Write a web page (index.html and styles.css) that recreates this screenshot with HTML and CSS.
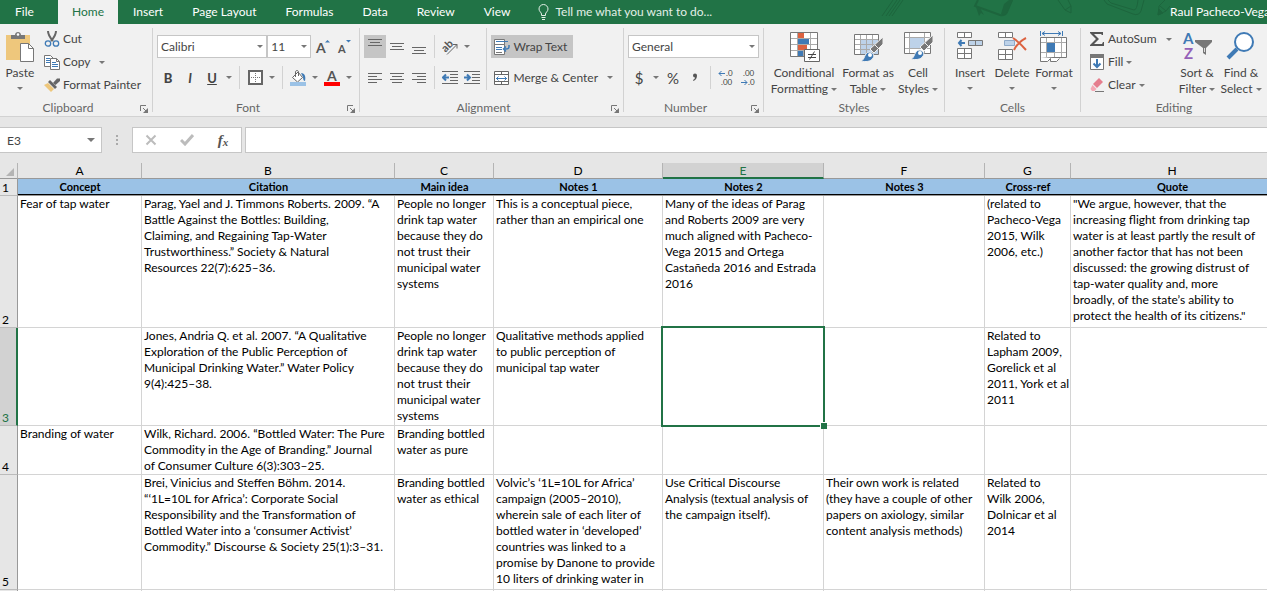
FILE: index.html
```html
<!DOCTYPE html>
<html lang="en">
<head>
    <meta charset="UTF-8">
    <meta name="viewport" content="width=device-width, initial-scale=1.0">
    <title>Literature notes - Excel</title>
    <link rel="stylesheet" href="styles.css">
</head>
<body>
    <!-- Ribbon tabs -->
    <header class="tabs">
        <svg class="doodles" width="300" height="24" viewBox="870 0 300 24" fill="none" stroke="#1d653d" stroke-width="1">
            <path d="M882 16 893 0M886 16 897 0M889 16 900 0M892 16 903 0"/>
            <path d="M978 0 975 6 1000 15Q1005 16 1007 12L1012 0" stroke-width="2"/>
            <path d="M976 7l3 9 2-3 3 2-4-7zM1004 4l5-4h4l-8 15-4-1z" fill="#1d653d" stroke="none"/>
            <path d="M1058 0l7 10 6 3 0-7-3-6M1065 10l6-4"/>
            <path d="M1104 0 1107 4 1133 14Q1139 16 1141 11L1144 0M1108 0 1111 3 1134 10Q1137 10 1138 0"/>
            <path d="M1165 0 1159 6 1158 15 1166 11 1170 6M1160 6l6 5"/>
            <path d="M1158 15l1-6 4 4z" fill="#1d653d"/>
        </svg>
        <nav>
            <a href="#" class="tab tab-file">File</a>
            <a href="#" class="tab active">Home</a>
            <a href="#" class="tab">Insert</a>
            <a href="#" class="tab">Page Layout</a>
            <a href="#" class="tab">Formulas</a>
            <a href="#" class="tab">Data</a>
            <a href="#" class="tab">Review</a>
            <a href="#" class="tab">View</a>
        </nav>
        <button class="tell-me">
            <svg width="11" height="16" viewBox="0 0 11 16" fill="none" stroke="#e3efe7"><path d="M3.5 11.500V10C3.500 8.500 1 7.500 1 5a4.500 4.500 0 0 1 9 0c0 2.500-2.500 3.500-2.500 5v1.500zM3.500 13.500h4M4 15.500h3"/></svg>
            Tell me what you want to do...
        </button>
        <span class="user">Raul Pacheco-Vega</span>
    </header>

    <!-- Ribbon -->
    <section class="ribbon">
        <div class="group clipboard">
            <div class="group-body">
                <button class="big paste">
                    <svg width="32" height="32" viewBox="0 0 32 32">
                        <path d="M2 4h24v25H2z" fill="#eec77c"/>
                        <path d="M7 8V4h4c0-4 6-4 6 0h4v4z" fill="#777"/><circle cx="14" cy="3.500" r="1.300" fill="#fff"/>
                        <path d="M16.500 12.500h8l5 5v13h-13z" fill="#fff" stroke="#777"/>
                        <path d="M24.500 12.500v5h5" fill="none" stroke="#777"/>
                    </svg>
                    <span>Paste</span>
                    <i class="caret"></i>
                </button>
                <div class="stack">
                    <button class="small">
                        <svg width="16" height="16" viewBox="0 0 16 16" fill="none">
                            <path d="M4 0c0 4 1.500 6 5 10M12 0c0 4-1.500 6-5 10" stroke="#666" stroke-width="2"/>
                            <circle cx="4" cy="12.500" r="2.700" stroke="#3f7ab5" stroke-width="1.300"/><circle cx="12" cy="12.500" r="2.700" stroke="#3f7ab5" stroke-width="1.300"/>
                        </svg>
                        Cut
                    </button>
                    <button class="small">
                        <svg width="16" height="16" viewBox="0 0 16 16">
                            <path d="M.5 1.500h6l3 3v8h-9z" fill="#fff" stroke="#777"/>
                            <path d="M2 4.500h4M2 6.500h4M2 8.500h4" stroke="#3f7ab5"/>
                            <path d="M6.500 4.500h6l3 3v8h-9z" fill="#fff" stroke="#777"/>
                            <path d="M12.500 4.500v3h3" fill="none" stroke="#777"/>
                            <path d="M8 8.500h4M8 10.500h6M8 12.500h6" stroke="#3f7ab5"/>
                        </svg>
                        Copy
                        <i class="caret wide"></i>
                    </button>
                    <button class="small">
                        <svg width="16" height="16" viewBox="0 0 16 16">
                            <path d="M0 8l4-2 6 6-3 3z" fill="#eec77c"/>
                            <path d="M4 5l2-2 7 7-2 2z" fill="#666"/>
                            <path d="M9 6l4-4.500h3V4l-4.500 4z" fill="#666"/>
                        </svg>
                        Format Painter
                    </button>
                </div>
            </div>
            <div class="group-name"><span>Clipboard</span><button class="launcher" aria-label="Clipboard settings"><svg width="8" height="8" viewBox="0 0 8 8"><path d="M.5 6V.500H6M3 3l3 3" fill="none" stroke="#777"/><path d="M8 3v5H3z" fill="#777"/></svg></button></div>
        </div>

        <div class="group font">
            <div class="group-body rows">
                <div class="row">
                    <div class="combo combo-font">
                        <select aria-label="Font"><option>Calibri</option></select>
                        <i class="caret"></i>
                    </div>
                    <div class="combo combo-size">
                        <select aria-label="Font size"><option>11</option></select>
                        <i class="caret"></i>
                    </div>
                    <button class="tool" aria-label="Increase font size">
                        <svg width="16" height="16" viewBox="0 0 16 16"><text x="2" y="14" font-size="14" fill="#555" font-weight="bold">A</text><path d="M11 3.500l2.500-2.500L16 3.500z" fill="#3f7ab5"/></svg>
                    </button>
                    <button class="tool" aria-label="Decrease font size">
                        <svg width="16" height="16" viewBox="0 0 16 16"><text x="2" y="14" font-size="11" fill="#555" font-weight="bold">A</text><path d="M10 1h5l-2.500 2.500z" fill="#3f7ab5"/></svg>
                    </button>
                </div>
                <div class="row">
                    <button class="tool letter"><b>B</b></button>
                    <button class="tool letter"><em>I</em></button>
                    <button class="tool letter"><u>U</u></button>
                    <button class="drop" aria-label="Underline styles"><i class="caret"></i></button>
                    <span class="sep"></span>
                    <button class="tool" aria-label="Borders">
                        <svg width="15" height="15" viewBox="0 0 15 15" fill="none"><path d="M1 1h13v13H1z" fill="#fff" stroke="#666" stroke-width="2"/><path d="M7.500 3v9M3 7.500h9" stroke="#777" stroke-dasharray="1 1"/></svg>
                    </button>
                    <button class="drop" aria-label="Border styles"><i class="caret"></i></button>
                    <span class="sep"></span>
                    <button class="tool" aria-label="Fill color">
                        <svg width="16" height="16" viewBox="0 0 16 16"><path d="M2.500 7.500L8 2l4.500 5.500L7.500 12z" fill="#fff" stroke="#666"/><path d="M5.500 7V2c0-2 3-2 3 0v4" fill="none" stroke="#666"/><path d="M11 3c4 0 5 4 4 8-1 0-2-1-2-4z" fill="#3f7ab5"/><path d="M0 12h16v4H0z" fill="#9bc2e6"/></svg>
                    </button>
                    <button class="drop" aria-label="Fill colors"><i class="caret"></i></button>
                    <button class="tool" aria-label="Font color">
                        <svg width="16" height="20" viewBox="0 0 16 20"><text x="3" y="13" font-size="14" fill="#555" font-weight="bold">A</text><path d="M0 14h16v4H0z" fill="#f00"/></svg>
                    </button>
                    <button class="drop" aria-label="Font colors"><i class="caret"></i></button>
                </div>
            </div>
            <div class="group-name"><span>Font</span><button class="launcher" aria-label="Font settings"><svg width="8" height="8" viewBox="0 0 8 8"><path d="M.5 6V.500H6M3 3l3 3" fill="none" stroke="#777"/><path d="M8 3v5H3z" fill="#777"/></svg></button></div>
        </div>

        <div class="group alignment">
            <div class="group-body">
                <div class="rows align-tools">
                    <div class="row">
                        <button class="tool pressed" aria-label="Top align"><svg width="14" height="16" viewBox="0 0 14 16" stroke="#666"><path d="M0 .5h14M2 3.500h10M0 6.500h14"/></svg></button>
                        <button class="tool" aria-label="Middle align"><svg width="14" height="16" viewBox="0 0 14 16" stroke="#666"><path d="M0 4.500h14M2 7.500h10M0 10.500h14"/></svg></button>
                        <button class="tool" aria-label="Bottom align"><svg width="14" height="16" viewBox="0 0 14 16" stroke="#666"><path d="M0 8.500h14M2 11.500h10M0 14.500h14"/></svg></button>
                        <span class="sep"></span>
                        <button class="tool" aria-label="Orientation">
                            <svg width="20" height="20" viewBox="0 0 20 20"><text x="2" y="13" font-size="11" font-weight="bold" fill="#555" transform="rotate(-45 7 10)">ab</text><path d="M7 17.500l10-10M13 7.500h4v4" fill="none" stroke="#666"/></svg>
                        </button>
                        <button class="drop" aria-label="Orientation options"><i class="caret"></i></button>
                    </div>
                    <div class="row">
                        <button class="tool" aria-label="Align left"><svg width="14" height="12" viewBox="0 0 14 12" stroke="#666"><path d="M0 1.500h14M0 4.500h9M0 7.500h14M0 10.500h9"/></svg></button>
                        <button class="tool" aria-label="Center"><svg width="14" height="12" viewBox="0 0 14 12" stroke="#666"><path d="M0 1.500h14M2 4.500h10M0 7.500h14M2 10.500h10"/></svg></button>
                        <button class="tool" aria-label="Align right"><svg width="14" height="12" viewBox="0 0 14 12" stroke="#666"><path d="M0 1.500h14M5 4.500h9M0 7.500h14M5 10.500h9"/></svg></button>
                        <span class="sep"></span>
                        <button class="tool" aria-label="Decrease indent"><svg width="16" height="14" viewBox="0 0 16 14" fill="none"><path d="M0 .5h16M8 3.500h8M8 6.500h8M8 9.500h8M0 12.500h16" stroke="#666"/><path d="M1 6.500h6M4 3.500l-3 3 3 3" stroke="#3f7ab5" stroke-width="2"/></svg></button>
                        <button class="tool" aria-label="Increase indent"><svg width="16" height="14" viewBox="0 0 16 14" fill="none"><path d="M0 .5h16M8 3.500h8M8 6.500h8M8 9.500h8M0 12.500h16" stroke="#666"/><path d="M0 6.500h6M3 3.500l3 3-3 3" stroke="#3f7ab5" stroke-width="2"/></svg></button>
                    </div>
                </div>
                <div class="rows wrap-tools">
                    <button class="text-tool pressed">
                        <svg width="16" height="16" viewBox="0 0 16 16" fill="none"><path d="M.5.500h10v5H.500zM.500 5.500h10v10H.500z" fill="#fff" stroke="#777"/><path d="M2 2.500h12M2 8.500h6M2 10.500h6" stroke="#3f7ab5"/><path d="M2 13.500h6" stroke="#777"/><path d="M15 6v2q0 2-3 2h-2M12 7.500l-2.500 2.500 2.500 2.500" stroke="#3f7ab5" stroke-width="1.500"/></svg>
                        Wrap Text
                    </button>
                    <button class="text-tool">
                        <svg width="16" height="16" viewBox="0 0 16 16" fill="none"><path d="M.5 1.500h14v13H.500zM.500 4.500h14M.500 11.500h14M7.500 1.500v3M7.500 11.500v3" fill="#fff" stroke="#666"/><path d="M2 8.500h11M4.500 6.500l-2 2 2 2M10.500 6.500l2 2-2 2" stroke="#3f7ab5"/></svg>
                        Merge &amp; Center
                        <i class="caret wide"></i>
                    </button>
                </div>
            </div>
            <div class="group-name"><span>Alignment</span><button class="launcher" aria-label="Alignment settings"><svg width="8" height="8" viewBox="0 0 8 8"><path d="M.5 6V.500H6M3 3l3 3" fill="none" stroke="#777"/><path d="M8 3v5H3z" fill="#777"/></svg></button></div>
        </div>

        <div class="group number">
            <div class="group-body rows">
                <div class="row">
                    <div class="combo combo-format">
                        <select aria-label="Number format"><option>General</option></select>
                        <i class="caret"></i>
                    </div>
                </div>
                <div class="row">
                    <button class="tool sign">$</button>
                    <button class="drop" aria-label="Currency formats"><i class="caret"></i></button>
                    <button class="tool sign">%</button>
                    <button class="tool" aria-label="Comma style"><svg width="6" height="10" viewBox="0 0 6 10"><path d="M1 2.500A2 2 0 0 1 5 2.500C5 5 4 7 1.500 8L1 7q2-1 2-2.500Q1 4.500 1 2.500z" fill="#555"/></svg></button>
                    <span class="sep"></span>
                    <button class="tool" aria-label="Increase decimal"><svg width="16" height="20" viewBox="0 0 16 20" font-size="8" fill="#444"><text x="8" y="8">.0</text><text x="3" y="17">.00</text><path d="M1 5.500h6M3.500 3l-2.500 2.500L3.500 8" fill="none" stroke="#3f7ab5"/></svg></button>
                    <button class="tool" aria-label="Decrease decimal"><svg width="16" height="20" viewBox="0 0 16 20" font-size="8" fill="#444"><text x="3" y="8">.00</text><text x="8" y="17">.0</text><path d="M1 14.500h6M4.500 12L7 14.500 4.500 17" fill="none" stroke="#3f7ab5"/></svg></button>
                </div>
            </div>
            <div class="group-name"><span>Number</span><button class="launcher" aria-label="Number settings"><svg width="8" height="8" viewBox="0 0 8 8"><path d="M.5 6V.500H6M3 3l3 3" fill="none" stroke="#777"/><path d="M8 3v5H3z" fill="#777"/></svg></button></div>
        </div>

        <div class="group styles">
            <div class="group-body">
                <button class="big conditional">
                    <svg width="32" height="32" viewBox="0 0 32 32">
                        <path d="M2.500 1.500h27v24h-27z" fill="#fff" stroke="#777"/>
                        <path d="M9.500 2v23M15.500 2v23M22.500 2v23M3 7.500h26M3 13.500h26M3 19.500h26" stroke="#aaa"/>
                        <path d="M10 2h6v5h-6zM10 14h9v5h-9z" fill="#dc6240"/><path d="M10 8h11v5H10zM10 20h5v5h-5z" fill="#3f7ab5"/>
                        <path d="M16.500 18.500h15v12h-15z" fill="#fff" stroke="#666"/>
                        <path d="M20 23.500h8M20 26.500h8M26.500 20.500l-5 8" stroke="#444" fill="none"/>
                    </svg>
                    <span>Conditional</span>
                    <span>Formatting <i class="caret"></i></span>
                </button>
                <button class="big format-table">
                    <svg width="32" height="32" viewBox="0 0 32 32">
                        <path d="M2.500 3.500h24v20h-24z" fill="#fff"/><path d="M9 9h17v14H9z" fill="#bdd2e9"/>
                        <path d="M8.500 4v19M14.500 4v19M20.500 4v19M3 8.500h23M3 13.500h23M3 18.500h23" stroke="#aaa"/>
                        <path d="M2.500 3.500h24v20h-24z" fill="none" stroke="#777"/>
                        <path d="M31 6v7l-9 9-4-4z" fill="#777" stroke="#f1f1f1"/><path d="M23 14l4 4" stroke="#f1f1f1"/>
                        <path d="M9 30c4-1 3-8 8-9 4 0 6 4 4 6-2 4-8 4-12 3z" fill="#3f7ab5" stroke="#f1f1f1"/><circle cx="18" cy="24" r="2" fill="#fff"/>
                    </svg>
                    <span>Format as</span>
                    <span>Table <i class="caret"></i></span>
                </button>
                <button class="big cell-styles">
                    <svg width="32" height="32" viewBox="0 0 32 32">
                        <path d="M2.500 1.500h26v21h-26z" fill="#fff" stroke="#777"/><path d="M8 7h14v10H8z" fill="#bdd2e9"/>
                        <path d="M7.500 2v20M22.500 2v20M3 6.500h25M3 17.500h25" stroke="#aaa"/>
                        <path d="M31 4v7l-9 9-4-4z" fill="#777" stroke="#f1f1f1"/><path d="M23 12l4 4" stroke="#f1f1f1"/>
                        <path d="M9 28c4-1 3-8 8-9 4 0 6 4 4 6-2 4-8 4-12 3z" fill="#3f7ab5" stroke="#f1f1f1"/><circle cx="18" cy="22" r="2" fill="#fff"/>
                    </svg>
                    <span>Cell</span>
                    <span>Styles <i class="caret"></i></span>
                </button>
            </div>
            <div class="group-name"><span>Styles</span></div>
        </div>

        <div class="group cells">
            <div class="group-body">
                <button class="big">
                    <svg width="32" height="32" viewBox="0 0 32 32">
                        <path d="M3.500 1.500h14v5h-14zM10.500 1.500v5M3.500 17.500h14v10h-14zM3.500 22.500h14M10.500 17.500v10" fill="#fff" stroke="#777"/>
                        <path d="M14.500 9.500h14v5h-14zM21.500 9.500v5" fill="#bdd2e9" stroke="#777"/>
                        <path d="M5 12h6M7.500 9L5 12l2.500 3" fill="none" stroke="#3f7ab5" stroke-width="2"/>
                    </svg>
                    <span>Insert</span>
                    <i class="caret"></i>
                </button>
                <button class="big">
                    <svg width="32" height="32" viewBox="0 0 32 32">
                        <path d="M2.500 1.500h14v5h-14zM9.500 1.500v5M2.500 18.500h14v10h-14zM2.500 23.500h14M9.500 18.500v10" fill="#fff" stroke="#777"/>
                        <path d="M8.500 9.500h10v5h-10z" fill="#bdd2e9" stroke="#8da9c9"/>
                        <path d="M17 7q6 4 13 12M30 7q-8 4-12 12" fill="none" stroke="#dc6240" stroke-width="2"/>
                    </svg>
                    <span>Delete</span>
                    <i class="caret"></i>
                </button>
                <button class="big">
                    <svg width="32" height="32" viewBox="0 0 32 32">
                        <path d="M2.500 6.500h26v20h-26z" fill="#fff" stroke="#777"/>
                        <path d="M8.500 7v19M16.500 7v19M23.500 7v19M3 11.500h25M3 21.500h25" stroke="#aaa"/>
                        <path d="M9 12h8v9H9z" fill="#3f7ab5"/>
                        <path d="M2.500 26v4.500h7l3-3v3h6l3-3" fill="#fff" stroke="#777"/>
                        <path d="M2.500 0v5M24.500 0v5M4 2.500h19M7 .5l-3 2 3 2M20 .5l3 2-3 2" fill="none" stroke="#3f7ab5"/>
                    </svg>
                    <span>Format</span>
                    <i class="caret"></i>
                </button>
            </div>
            <div class="group-name"><span>Cells</span></div>
        </div>

        <div class="group editing">
            <div class="group-body">
                <div class="stack">
                    <button class="small">
                        <svg width="16" height="16" viewBox="0 0 16 16"><path d="M1 1h13v3h-1L12 3H5l5 5-5 5h8l1-2h1v4H1v-1l6-6-6-6z" fill="#555"/></svg>
                        AutoSum
                        <i class="caret wide"></i>
                    </button>
                    <button class="small">
                        <svg width="16" height="16" viewBox="0 0 16 16"><path d="M1.500.500h13v15h-13z" fill="#fff" stroke="#777"/><path d="M1 0h14v4H1z" fill="#777"/><path d="M8 5v8M4.500 9.500L8 13l3.500-3.500" fill="none" stroke="#3f7ab5" stroke-width="2"/></svg>
                        Fill<i class="caret"></i>
                    </button>
                    <button class="small">
                        <svg width="16" height="16" viewBox="0 0 16 16"><path d="M4 7l6-6 4 4-6 6z" fill="#e57e8e"/><path d="M3.500 8l4 4-2 2H3l-1.500-2z" fill="#f4a9b4"/><path d="M6 14.500h9" stroke="#777"/></svg>
                        Clear<i class="caret"></i>
                    </button>
                </div>
                <button class="big">
                    <svg width="32" height="32" viewBox="0 0 32 32">
                        <text x="2" y="13" font-size="15" font-weight="bold" fill="#3f7ab5">A</text>
                        <text x="3" y="28" font-size="15" font-weight="bold" fill="#9460b8">Z</text>
                        <path d="M14 9h17v2l-6 6v7l-3-2v-5l-8-6z" fill="#777"/><path d="M23.500 17v4" stroke="#ddd"/>
                    </svg>
                    <span>Sort &amp;</span>
                    <span>Filter <i class="caret"></i></span>
                </button>
                <button class="big">
                    <svg width="32" height="32" viewBox="0 0 32 32"><path d="M3 27L12 18" stroke="#3f7ab5" stroke-width="4"/><circle cx="19" cy="11" r="9" fill="#fff" stroke="#3f7ab5" stroke-width="2"/></svg>
                    <span>Find &amp;</span>
                    <span>Select <i class="caret"></i></span>
                </button>
            </div>
            <div class="group-name"><span>Editing</span></div>
        </div>
    </section>

    <!-- Name box and formula bar -->
    <section class="formula-bar">
        <div class="name-box">
            <input type="text" value="E3" aria-label="Name box">
            <i class="caret"></i>
        </div>
        <span class="dots"><i></i><i></i><i></i></span>
        <div class="fx-box">
            <button aria-label="Cancel"><svg width="12" height="12" viewBox="0 0 12 12"><path d="M1.500 1.500l9 9M10.500 1.500l-9 9" stroke="#bcbcbc" stroke-width="2"/></svg></button>
            <button aria-label="Enter"><svg width="14" height="12" viewBox="0 0 14 12"><path d="M1 6l4 4 8-9" fill="none" stroke="#bcbcbc" stroke-width="3"/></svg></button>
            <button class="fx">f<small>x</small></button>
        </div>
        <input class="formula" type="text" aria-label="Formula">
    </section>

    <!-- Worksheet -->
    <main class="sheet">
        <table>
            <colgroup>
                <col class="col-head"><col class="col-a"><col class="col-b"><col class="col-c"><col class="col-d"><col class="col-e"><col class="col-f"><col class="col-g"><col class="col-h">
            </colgroup>
            <thead>
                <tr>
                    <th class="corner"><svg width="8" height="8" viewBox="0 0 8 8"><path d="M8 0v8H0z" fill="#b4b4b4"/></svg></th>
                    <th>A</th>
                    <th>B</th>
                    <th>C</th>
                    <th>D</th>
                    <th class="current">E</th>
                    <th>F</th>
                    <th>G</th>
                    <th>H</th>
                </tr>
            </thead>
            <tbody>
                <tr class="titles">
                    <th>1</th>
                    <td>Concept</td>
                    <td>Citation</td>
                    <td>Main idea</td>
                    <td>Notes 1</td>
                    <td>Notes 2</td>
                    <td>Notes 3</td>
                    <td>Cross-ref</td>
                    <td>Quote</td>
                </tr>
                <tr class="row-2">
                    <th>2</th>
                    <td>Fear of tap water</td>
                    <td>Parag, Yael and J. Timmons Roberts. 2009. “A<br>Battle Against the Bottles: Building,<br>Claiming, and Regaining Tap-Water<br>Trustworthiness.” Society &amp; Natural<br>Resources 22(7):625–36.</td>
                    <td>People no longer<br>drink tap water<br>because they do<br>not trust their<br>municipal water<br>systems</td>
                    <td>This is a conceptual piece,<br>rather than an empirical one</td>
                    <td>Many of the ideas of Parag<br>and Roberts 2009 are very<br>much aligned with Pacheco-<br>Vega 2015 and Ortega<br>Castañeda 2016 and Estrada<br>2016</td>
                    <td></td>
                    <td>(related to<br>Pacheco-Vega<br>2015, Wilk<br>2006, etc.)</td>
                    <td>"We argue, however, that the<br>increasing flight from drinking tap<br>water is at least partly the result of<br>another factor that has not been<br>discussed: the growing distrust of<br>tap-water quality and, more<br>broadly, of the state’s ability to<br>protect the health of its citizens."</td>
                </tr>
                <tr class="row-3">
                    <th class="current">3</th>
                    <td></td>
                    <td>Jones, Andria Q. et al. 2007. “A Qualitative<br>Exploration of the Public Perception of<br>Municipal Drinking Water.” Water Policy<br>9(4):425–38.</td>
                    <td>People no longer<br>drink tap water<br>because they do<br>not trust their<br>municipal water<br>systems</td>
                    <td>Qualitative methods applied<br>to public perception of<br>municipal tap water</td>
                    <td class="selected"></td>
                    <td></td>
                    <td>Related to<br>Lapham 2009,<br>Gorelick et al<br>2011, York et al<br>2011</td>
                    <td></td>
                </tr>
                <tr class="row-4">
                    <th>4</th>
                    <td>Branding of water</td>
                    <td>Wilk, Richard. 2006. “Bottled Water: The Pure<br>Commodity in the Age of Branding.” Journal<br>of Consumer Culture 6(3):303–25.</td>
                    <td>Branding bottled<br>water as pure</td>
                    <td></td>
                    <td></td>
                    <td></td>
                    <td></td>
                    <td></td>
                </tr>
                <tr class="row-5">
                    <th>5</th>
                    <td></td>
                    <td>Brei, Vinicius and Steffen Böhm. 2014.<br>“‘1L=10L for Africa’: Corporate Social<br>Responsibility and the Transformation of<br>Bottled Water into a ‘consumer Activist’<br>Commodity.” Discourse &amp; Society 25(1):3–31.</td>
                    <td>Branding bottled<br>water as ethical</td>
                    <td>Volvic’s ‘1L=10L for Africa’<br>campaign (2005–2010),<br>wherein sale of each liter of<br>bottled water in ‘developed’<br>countries was linked to a<br>promise by Danone to provide<br>10 liters of drinking water in</td>
                    <td>Use Critical Discourse<br>Analysis (textual analysis of<br>the campaign itself).</td>
                    <td>Their own work is related<br>(they have a couple of other<br>papers on axiology, similar<br>content analysis methods)</td>
                    <td>Related to<br>Wilk 2006,<br>Dolnicar et al<br>2014</td>
                    <td></td>
                </tr>
                <tr class="row-6">
                    <th></th>
                    <td></td>
                    <td></td>
                    <td></td>
                    <td></td>
                    <td></td>
                    <td></td>
                    <td></td>
                    <td></td>
                </tr>
            </tbody>
        </table>
    </main>
</body>
</html>
```
FILE: styles.css
```css
* {
    margin: 0;
    padding: 0;
    box-sizing: border-box;
}

body {
    display: flex;
    flex-direction: column;
    height: 100vh;
    overflow: hidden;
    background: #e6e6e6;
    color: #444;
    font-family: Lato, "Open Sans", sans-serif;
    font-size: 12px;
    line-height: 16px;
}

button,
input,
select {
    font: inherit;
    color: inherit;
    background: none;
    border: none;
    white-space: nowrap;
}

svg {
    display: block;
    flex: none;
}

.caret {
    display: inline-block;
    flex: none;
    border: 3px solid transparent;
    border-top-color: #777;
    border-bottom: none;
    vertical-align: middle;
}

/* Tabs */
.tabs {
    position: relative;
    display: flex;
    flex: none;
    height: 24px;
    overflow: hidden;
    background: #217346;
    color: #fff;
    line-height: 24px;
    white-space: nowrap;
}

.doodles {
    position: absolute;
    top: 0;
    right: 97px;
}

.tabs nav {
    display: flex;
    gap: 1px;
}

.tab {
    padding: 0 14px;
    color: #fff;
    text-decoration: none;
}

.tab-file {
    width: 57px;
    padding: 0 15px;
}

.tab.active {
    width: 60px;
    background: #f1f1f1;
    color: #217346;
    text-align: center;
    padding: 0;
}

.tell-me {
    display: flex;
    align-items: center;
    gap: 6px;
    padding-left: 14px;
    color: #e3efe7;
}

.user {
    position: relative;
    width: 97px;
    margin-left: auto;
}

/* Ribbon */
.ribbon {
    display: flex;
    flex: none;
    padding: 4px 0;
    overflow: hidden;
    background: #f1f1f1;
    border-bottom: 1px solid #d2d2d2;
}

.group {
    display: flex;
    flex: none;
    flex-direction: column;
    height: 84px;
    border-right: 1px solid #d2d2d2;
}

.clipboard { width: 153px; }
.font { width: 207px; }
.alignment { width: 264px; }
.number { width: 140px; }
.styles { width: 181px; }
.cells { width: 136px; }
.editing { flex: 1 0 186px; border-right: none; }

.group-body {
    display: flex;
    height: 70px;
    padding: 0 4px;
}

.clipboard .group-body {
    padding: 0;
}

.group-name {
    display: flex;
    height: 14px;
    color: #666;
    line-height: 20px;
}

.group-name span {
    flex: 1;
    text-align: center;
}

.launcher {
    width: 16px;
    padding: 7px 0 0 4px;
}

.rows {
    display: flex;
    flex-direction: column;
    gap: 8px;
}

.group-body.rows,
.group-body .rows {
    padding-top: 7px;
}

.row {
    display: flex;
    align-items: center;
    height: 23px;
}

.tool,
.drop {
    display: flex;
    align-items: center;
    justify-content: center;
    flex: none;
    width: 22px;
    height: 23px;
}

.drop {
    width: 12px;
}

.letter {
    color: #444;
    font-size: 13px;
    font-weight: bold;
}

.sign {
    font-size: 15px;
}

.pressed {
    background: #c5c5c5;
}

.sep {
    width: 1px;
    height: 23px;
    margin: 0 4px;
    background: #d2d2d2;
}

.combo {
    position: relative;
    height: 23px;
    background: #fff;
    border: 1px solid #c6c6c6;
}

.combo select {
    width: 100%;
    height: 21px;
    padding-left: 3px;
    appearance: none;
}

.combo .caret {
    position: absolute;
    top: 9px;
    right: 3px;
    pointer-events: none;
}

.combo-font { width: 111px; }
.combo-size { width: 44px; }
.combo-format { width: 131px; }

/* Large buttons with the label under the icon */
.big {
    display: flex;
    flex-direction: column;
    align-items: center;
    flex: none;
    width: 42px;
    padding-top: 3px;
}

.big svg {
    margin-bottom: 2px;
}

.big > .caret {
    margin-top: 6px;
}

.paste { width: 40px; }
.conditional { width: 72px; }
.format-table { width: 56px; }
.cell-styles { width: 44px; }
.editing .big { width: 44px; }

.stack {
    display: flex;
    flex-direction: column;
    padding-left: 4px;
}

.editing .stack {
    width: 90px;
}

.small {
    display: flex;
    align-items: center;
    gap: 3px;
    height: 23px;
    padding-bottom: 1px;
}

.small .wide,
.text-tool .wide {
    margin-left: 6px;
}

.align-tools {
    width: 124px;
}

.wrap-tools {
    padding-left: 4px;
    margin-bottom: 8px;
    border-left: 1px solid #d2d2d2;
    align-items: flex-start;
}

.text-tool {
    display: flex;
    align-items: center;
    gap: 3px;
    height: 23px;
    padding: 0 6px 0 3px;
}

/* Formula bar */
.formula-bar {
    display: flex;
    flex: none;
    padding: 10px 0;
}

.name-box {
    position: relative;
    width: 102px;
    height: 26px;
    background: #fff;
    border: 1px solid #c6c6c6;
    border-left: none;
}

.name-box input {
    width: 80px;
    height: 24px;
    padding-left: 7px;
}

.name-box .caret {
    position: absolute;
    top: 10px;
    right: 6px;
    border-width: 4px;
    border-bottom: none;
}

.dots {
    display: flex;
    flex-direction: column;
    align-items: center;
    justify-content: center;
    gap: 2px;
    width: 30px;
}

.dots i {
    width: 2px;
    height: 2px;
    background: #aaa;
}

.fx-box {
    display: flex;
    width: 110px;
    margin-right: 3px;
    background: #fff;
    border: 1px solid #c6c6c6;
}

.fx-box button {
    display: flex;
    align-items: center;
    justify-content: center;
    width: 36px;
}

.fx-box .fx {
    color: #555;
    font: italic bold 15px "Liberation Serif", serif;
}

.fx small {
    font-size: 11px;
    padding-top: 4px;
}

.formula {
    flex: 1;
    background: #fff;
    border: 1px solid #c6c6c6;
    border-right: none;
}

/* Sheet */
.sheet {
    flex: 1;
    overflow: hidden;
}

table {
    width: 100%;
    min-width: 1274px;
    table-layout: fixed;
    border-collapse: separate;
    border-spacing: 0;
    color: #000;
    white-space: nowrap;
}

.col-head { width: 18px; }
.col-a { width: 124px; }
.col-b { width: 253px; }
.col-c { width: 99px; }
.col-d { width: 169px; }
.col-e { width: 161px; }
.col-f { width: 161px; }
.col-g { width: 86px; }

thead th {
    height: 16px;
    line-height: 14px;
    font-weight: normal;
    border-right: 1px solid #b4b4b4;
    border-bottom: 1px solid #999;
}

thead .current {
    background: #d2d2d2;
    color: #217346;
    border-bottom: 2px solid #217346;
    line-height: 13px;
}

.corner svg {
    margin: 2px 0 0 6px;
}

tbody th {
    padding-left: 2px;
    background: #e6e6e6;
    border-right: 1px solid #999;
    border-bottom: 1px solid #bbb;
    font-weight: normal;
    text-align: left;
    vertical-align: bottom;
    line-height: 14px;
}

tbody th.current {
    background: #d2d2d2;
    color: #217346;
    border-right: 2px solid #217346;
}

td {
    padding-left: 2px;
    background: #fff;
    border-right: 1px solid #d4d4d4;
    border-bottom: 1px solid #d4d4d4;
    vertical-align: top;
}

.titles td {
    height: 17px;
    padding: 0;
    background: #9bc2e6;
    border-right: none;
    border-bottom-color: #999;
    box-shadow: inset 0 -1px #000;
    font-size: 11px;
    font-weight: bold;
    text-align: center;
}

.row-2 { height: 132px; }
.row-3 { height: 98px; }
.row-4 { height: 49px; }
.row-5 { height: 115px; }
.row-6 { height: 49px; }

.selected {
    position: relative;
}

.selected::before {
    content: "";
    position: absolute;
    inset: -2px;
    border: 2px solid #217346;
}

.selected::after {
    content: "";
    position: absolute;
    right: -4px;
    bottom: -4px;
    width: 6px;
    height: 6px;
    background: #217346;
    border: 1px solid #fff;
    border-right: none;
    border-bottom: none;
}
```
